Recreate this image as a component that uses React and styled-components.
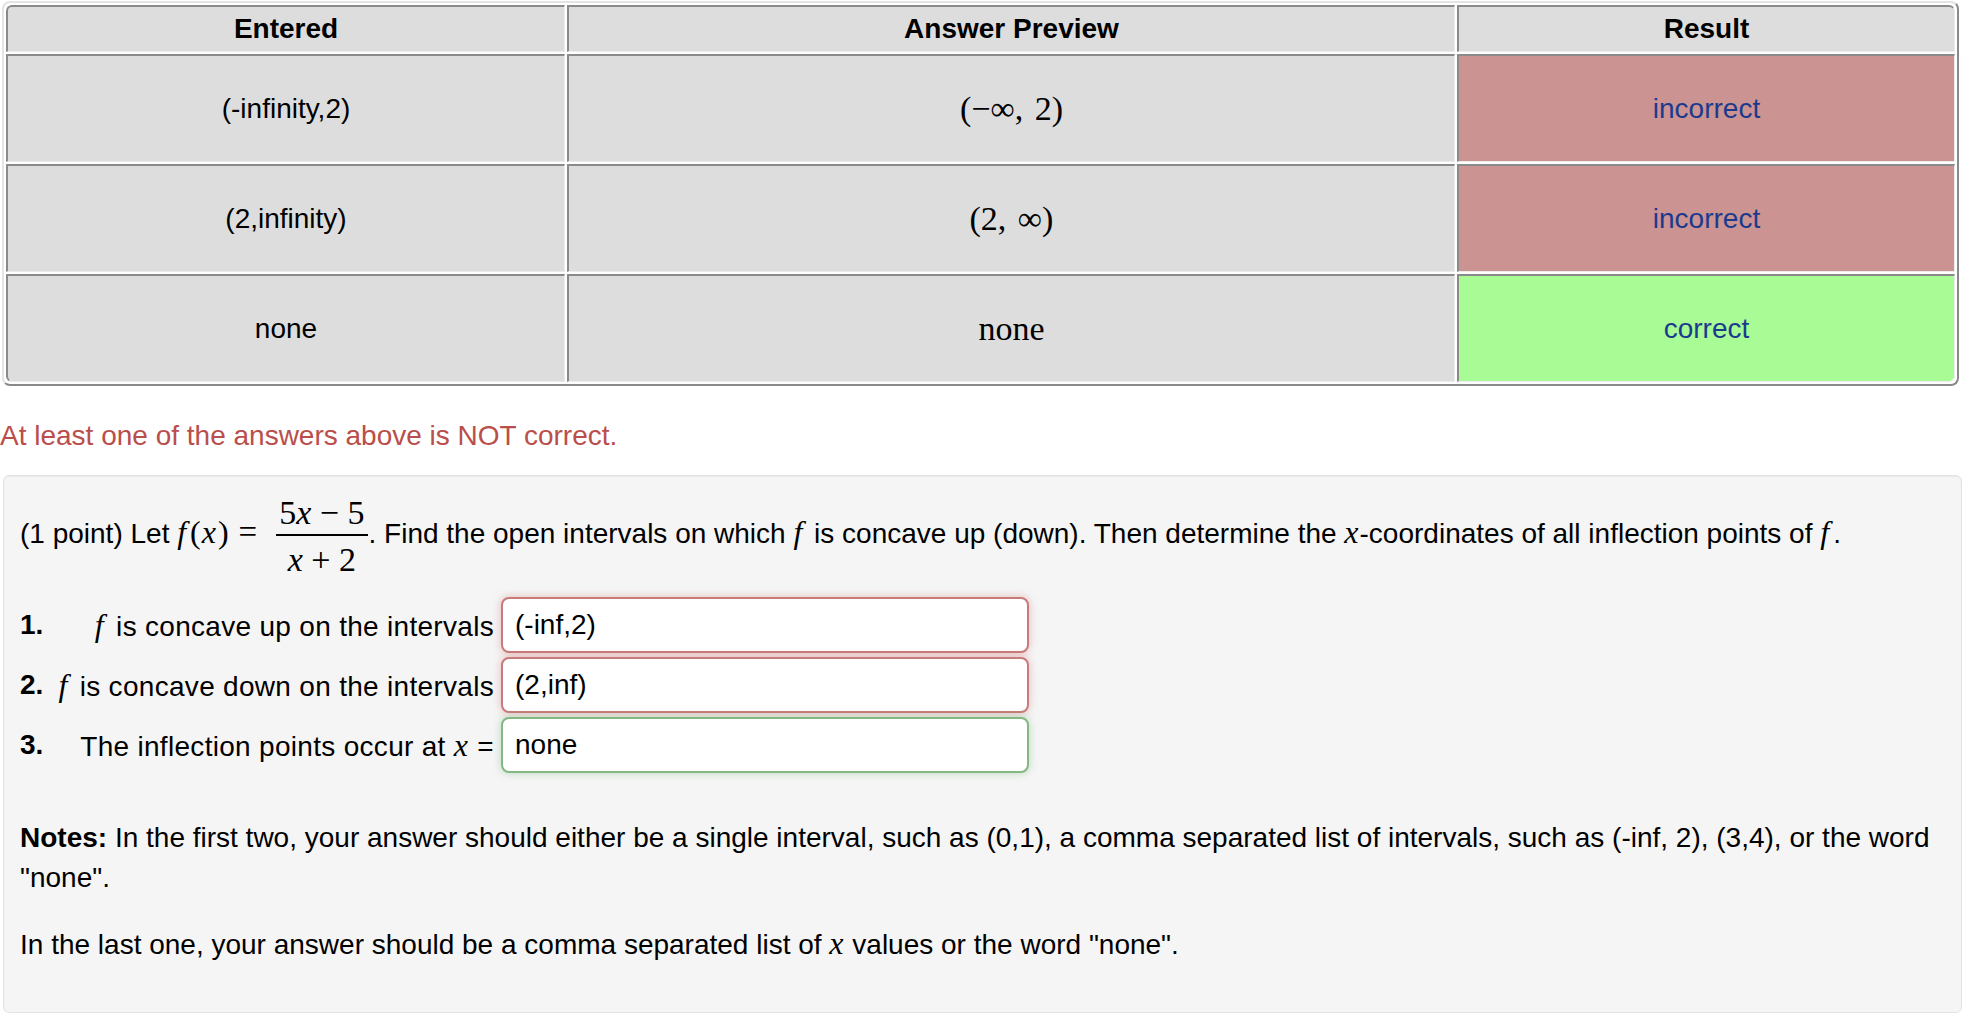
import React from 'react';
import styled, { createGlobalStyle, css } from 'styled-components';

const MATH_FONT = '"Liberation Serif", "Times New Roman", serif';

const GlobalStyle = createGlobalStyle`
  html, body { margin: 0; padding: 0; background: #ffffff; }
  body {
    font-family: "Liberation Sans", Arial, Helvetica, sans-serif;
    font-size: 28px;
    color: #000;
  }
  * { box-sizing: border-box; }
`;

const Page = styled.div`
  width: 1966px;
  padding-top: 1px;
`;

const ResultsTable = styled.table`
  margin-left: 2px;
  width: 1957px;
  table-layout: fixed;
  border-collapse: separate;
  border-spacing: 2px;
  border: 2px solid;
  border-color: #e4e4e4 #8a8a8a #8a8a8a #e4e4e4;
  border-radius: 8px;
`;

const Col = styled.col`
  width: ${p => p.$w}px;
`;

const cellBase = css`
  border-style: solid;
  border-width: 2px 1px 1px 2px;
  border-color: #8a8a8a #ececec #ececec #8a8a8a;
  background: #dddddd;
  text-align: center;
  vertical-align: middle;
  padding: 0 5px;
  &:first-child { border-top-left-radius: ${p => (p.$top ? '6px' : '0')}; border-bottom-left-radius: ${p => (p.$bottom ? '6px' : '0')}; }
  &:last-child { border-top-right-radius: ${p => (p.$top ? '6px' : '0')}; border-bottom-right-radius: ${p => (p.$bottom ? '6px' : '0')}; }
`;

const HeadCell = styled.th`
  ${cellBase}
  height: 47px;
  font-weight: bold;
`;

const Cell = styled.td`
  ${cellBase}
  height: 108px;
  font-weight: normal;
  ${p => p.$math && css`
    font-family: ${MATH_FONT};
    font-size: 34px;
    word-spacing: 3px;
  `}
  ${p => p.$status && css`
    color: #1b3a8e;
    background: ${p.$status === 'correct' ? '#a8fb95' : '#cb9391'};
  `}
`;

const Message = styled.div`
  margin-top: 30px;
  line-height: 40px;
  color: #ba4e4b;
`;

const Well = styled.div`
  margin: 19px 0 0 3px;
  width: 1959px;
  padding: 19px 16px 47px 16px;
  background: #f5f5f5;
  border: 1px solid #e3e3e3;
  border-radius: 6px;
  box-shadow: inset 0 1px 1px rgba(0, 0, 0, 0.05);
`;

const ProblemText = styled.p`
  margin: 0;
  line-height: 40px;
  white-space: nowrap;
`;

const MathI = styled.span`
  font-family: ${MATH_FONT};
  font-style: italic;
  font-size: 32px;
  padding: 0 ${p => p.$pr || 0}px 0 ${p => p.$pl || 0}px;
`;

const MathR = styled.span`
  font-family: ${MATH_FONT};
  font-size: 32px;
  padding: 0 ${p => p.$pr || 0}px 0 ${p => p.$pl || 0}px;
`;

const Op = styled.span`
  font-family: ${MATH_FONT};
  font-size: 33px;
  padding: 0 ${p => p.$pad || 8}px;
`;

const Fraction = styled.span`
  display: inline-flex;
  flex-direction: column;
  align-items: center;
  vertical-align: middle;
  margin: 0 1px 0 9px;
  font-family: ${MATH_FONT};
  font-size: 34px;
  line-height: 35px;
`;

const Num = styled.span`
  padding: 0 3px 4px;
`;

const Bar = styled.span`
  align-self: stretch;
  height: 2px;
  background: #000;
`;

const Den = styled.span`
  padding: 6px 3px 0;
`;

const AnswerGrid = styled.div`
  margin-top: 20px;
  display: grid;
  grid-template-columns: 24px 443px 528px;
  justify-content: start;
  align-items: center;
  column-gap: 7px;
  row-gap: 4px;
`;

const Number = styled.span`
  font-weight: bold;
  white-space: nowrap;
`;

const Label = styled.span`
  text-align: right;
  white-space: nowrap;
  letter-spacing: 0.3px;
`;

const AnswerInput = styled.input`
  width: 528px;
  height: 56px;
  padding: 0 12px;
  font-family: inherit;
  font-size: 28px;
  color: #000;
  background: #fff;
  border: 2px solid ${p => (p.$ok ? '#83b883' : '#c97b7b')};
  border-radius: 8px;
  box-shadow: 0 0 8px ${p => (p.$ok ? 'rgba(90, 160, 90, 0.35)' : 'rgba(200, 80, 80, 0.35)')};
  outline: none;
`;

const Para = styled.p`
  margin: ${p => p.$mt}px 0 0;
  line-height: 40px;
`;

const rows = [
  { entered: '(-infinity,2)', preview: '(\u2212\u221E, 2)', result: 'incorrect' },
  { entered: '(2,infinity)', preview: '(2, \u221E)', result: 'incorrect' },
  { entered: 'none', preview: 'none', result: 'correct' },
];

export default function App() {
  return (
    <Page>
      <GlobalStyle />
      <ResultsTable>
        <colgroup>
          <Col $w={559} />
          <Col $w={888} />
          <Col $w={498} />
        </colgroup>
        <thead>
          <tr>
            <HeadCell $top>Entered</HeadCell>
            <HeadCell $top>Answer Preview</HeadCell>
            <HeadCell $top>Result</HeadCell>
          </tr>
        </thead>
        <tbody>
          {rows.map((r, i) => (
            <tr key={i}>
              <Cell $bottom={i === rows.length - 1}>{r.entered}</Cell>
              <Cell $math $bottom={i === rows.length - 1}>{r.preview}</Cell>
              <Cell $status={r.result} $bottom={i === rows.length - 1}>{r.result}</Cell>
            </tr>
          ))}
        </tbody>
      </ResultsTable>

      <Message>At least one of the answers above is NOT correct.</Message>

      <Well>
        <ProblemText>
          (1 point) Let <MathI $pr={4}>f</MathI><MathR $pr={1}>(</MathR><MathI $pr={2}>x</MathI><MathR>)</MathR>
          <Op $pad={10}>=</Op>
          <Fraction>
            <Num>5<i>x</i>&nbsp;&minus;&nbsp;5</Num>
            <Bar />
            <Den><i>x</i>&nbsp;+&nbsp;2</Den>
          </Fraction>
          . Find the open intervals on which <MathI $pr={4}>f</MathI> is concave up (down). Then determine the <MathI $pr={1}>x</MathI>-coordinates of all inflection points of <MathI $pr={4}>f</MathI>.
        </ProblemText>

        <AnswerGrid>
          <Number>1.</Number>
          <Label><MathI $pr={4}>f</MathI> is concave up on the intervals</Label>
          <AnswerInput readOnly value="(-inf,2)" />

          <Number>2.</Number>
          <Label><MathI $pr={4}>f</MathI> is concave down on the intervals</Label>
          <AnswerInput readOnly value="(2,inf)" />

          <Number>3.</Number>
          <Label>The inflection points occur at <MathI $pr={1}>x</MathI> =</Label>
          <AnswerInput readOnly $ok value="none" />
        </AnswerGrid>

        <Para $mt={45}>
          <b>Notes:</b> In the first two, your answer should either be a single interval, such as (0,1), a comma separated list of intervals, such as (-inf, 2), (3,4), or the word "none".
        </Para>
        <Para $mt={25}>
          In the last one, your answer should be a comma separated list of <MathI $pr={1}>x</MathI> values or the word "none".
        </Para>
      </Well>
    </Page>
  );
}
